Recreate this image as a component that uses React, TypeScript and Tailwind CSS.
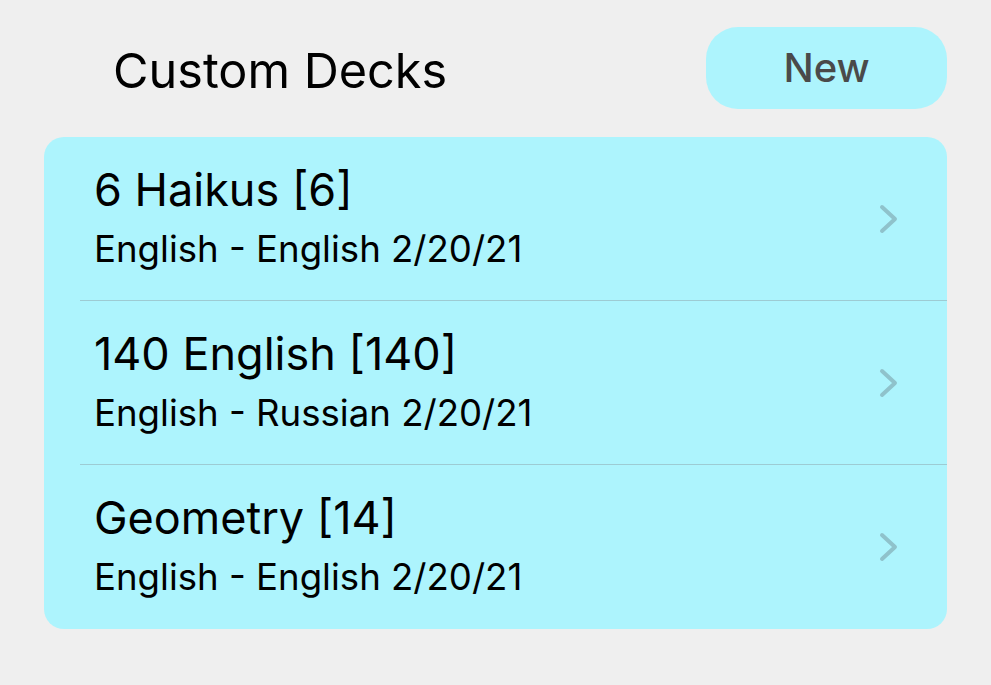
interface Deck {
  title: string;
  subtitle: string;
}

const decks: Deck[] = [
  { title: "6 Haikus [6]", subtitle: "English - English 2/20/21" },
  { title: "140 English [140]", subtitle: "English - Russian 2/20/21" },
  { title: "Geometry [14]", subtitle: "English - English 2/20/21" },
];

const Chevron = () => (
  <svg width="20" height="30" viewBox="0 0 20 30" fill="none" className="shrink-0">
    <path d="M3 3 L16 15 L3 27" stroke="#8fc2cb" strokeWidth="4" strokeLinecap="round" strokeLinejoin="round" />
  </svg>
);

const DeckRow = ({ deck, last }: { deck: Deck; last: boolean }) => (
  <div className="relative flex h-[164px] items-center pb-[4px] pl-[50px] pr-[48px]">
    <div className="flex flex-1 flex-col gap-[11px]">
      <span className="text-[45px] leading-[52px] text-black">{deck.title}</span>
      <span className="text-[36.6px] leading-[44px] text-black">{deck.subtitle}</span>
    </div>
    <div className="pt-[4px]">
      <Chevron />
    </div>
    {!last && <div className="absolute bottom-0 left-[36px] right-0 h-px bg-[#9dcbd3]" />}
  </div>
);

export default function App() {
  return (
    <div
      className="min-h-[685px] w-full bg-[#efefef] px-[44px] pt-[27px]"
      style={{ fontFamily: "Inter, 'Noto Sans', sans-serif" }}
    >
      <div className="flex h-[82px] items-center justify-between">
        <h1 className="pl-[69px] pt-[6px] text-[48.6px] leading-[76px] text-black">Custom Decks</h1>
        <button className="flex h-[82px] w-[241px] items-center justify-center rounded-[32px] bg-[#adf4fd] text-[40px] font-medium text-[#4a4a4a]">
          New
        </button>
      </div>
      <div className="mt-[28px] overflow-hidden rounded-[20px] bg-[#adf4fd]">
        {decks.map((d, i) => (
          <DeckRow key={d.title} deck={d} last={i === decks.length - 1} />
        ))}
      </div>
    </div>
  );
}
